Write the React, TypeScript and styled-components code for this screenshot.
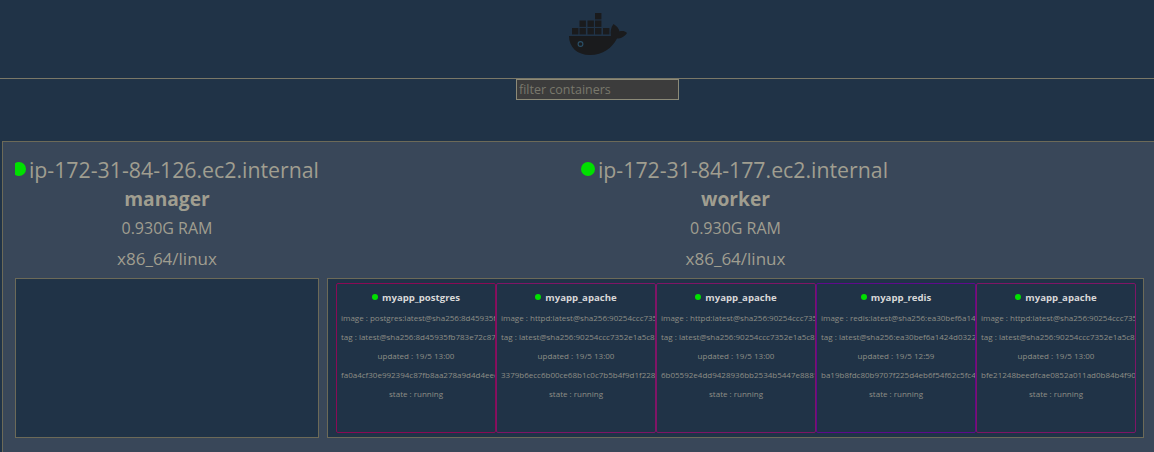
import React from "react";
import styled, { createGlobalStyle } from "styled-components";

const GlobalStyle = createGlobalStyle`
  html, body {
    margin: 0;
    height: 100%;
    overflow: hidden;
    background: #203347;
    font-family: "Open Sans", sans-serif;
  }
`;

const Header = styled.header`
  height: 65px;
  display: flex;
  justify-content: center;
  align-items: flex-start;
  padding: 13px 0 0 41px;
  border-bottom: 1px solid #7a7868;
`;

const FilterRow = styled.div`
  display: flex;
  justify-content: center;
  height: 62px;
  padding-left: 41px;
`;

const FilterInput = styled.input`
  width: 163px;
  height: 21px;
  box-sizing: border-box;
  background: #3c3c3c;
  border: 1px solid #8c8a78;
  padding: 0 2px;
  font: 12.5px "Open Sans", sans-serif;
  color: #9a9888;
  &::placeholder {
    color: #79786c;
    opacity: 1;
  }
`;

const Cluster = styled.main`
  margin-left: 2px;
  width: 1200px;
  height: 320px;
  box-sizing: border-box;
  background: #394759;
  border: 1px solid #6c6a58;
  border-bottom: 0;
  padding: 12px 0 0 12px;
  display: flex;
  gap: 8px;
`;

const Node = styled.section<{ $grow?: boolean }>`
  width: ${(p) => (p.$grow ? "817px" : "304px")};
  flex: none;
  color: #a09e90;
  text-align: center;
  display: flex;
  flex-direction: column;
  overflow: hidden;
`;

const Host = styled.div<{ $tight?: boolean }>`
  display: flex;
  justify-content: ${(p) => (p.$tight ? "flex-end" : "center")};
  align-items: center;
  gap: 3px;
  height: 30px;
  font-size: 21.3px;
  font-weight: 400;
  white-space: nowrap;
  padding-right: ${(p) => (p.$tight ? "0" : "2px")};
`;

const Dot = styled.span<{ $size: number }>`
  width: ${(p) => p.$size}px;
  height: ${(p) => p.$size}px;
  flex: none;
  border-radius: 50%;
  background: #00e000;
`;

const Role = styled.div`
  font-size: 19.2px;
  font-weight: 700;
  height: 30px;
  line-height: 30px;
`;

const Spec = styled.div<{ $wide?: boolean }>`
  font-size: ${(p) => (p.$wide ? "17px" : "16px")};
  height: 29.5px;
  line-height: 29.5px;
`;

const Tasks = styled.div`
  margin-top: 5px;
  height: 160px;
  box-sizing: border-box;
  background: #203347;
  border: 1px solid #6c6a58;
  display: flex;
  padding: 4px 7px 4px 8px;
`;

const Card = styled.article<{ $color: string }>`
  width: 160px;
  height: 150px;
  box-sizing: border-box;
  flex: none;
  border: 1px solid ${(p) => p.$color};
  border-radius: 2px;
  overflow: hidden;
  padding: 0 4px;
  font-size: 8px;
  color: #8e8e86;
  white-space: nowrap;
  text-align: center;
`;

const CardTitle = styled.div`
  display: flex;
  justify-content: center;
  align-items: center;
  gap: 4px;
  height: 23.5px;
  padding-top: 3px;
  box-sizing: border-box;
  font-size: 9.6px;
  font-weight: 700;
  color: #d8d8d8;
`;

const CardLine = styled.div<{ $left?: boolean }>`
  height: 19.2px;
  line-height: 19.2px;
  text-align: ${(p) => (p.$left ? "left" : "center")};
`;

type Task = {
  name: string;
  color: string;
  image: string;
  tag: string;
  updated: string;
  id: string;
};

const tasks: Task[] = [
  {
    name: "myapp_postgres",
    color: "#8a0a55",
    image: "postgres:latest@sha256:8d45935fb783e72c87",
    tag: "latest@sha256:8d45935fb783e72c87b1c0c7b5",
    updated: "19/5 13:00",
    id: "fa0a4cf30e992394c87fb8aa278a9d4d4eec1a",
  },
  {
    name: "myapp_apache",
    color: "#7f1566",
    image: "httpd:latest@sha256:90254ccc7352e1a5c8",
    tag: "latest@sha256:90254ccc7352e1a5c8e0b1c2",
    updated: "19/5 13:00",
    id: "3379b6ecc6b00ce68b1c0c7b5b4f9d1f2286aa",
  },
  {
    name: "myapp_apache",
    color: "#7f1566",
    image: "httpd:latest@sha256:90254ccc7352e1a5c8",
    tag: "latest@sha256:90254ccc7352e1a5c8e0b1c2",
    updated: "19/5 13:00",
    id: "6b05592e4dd9428936bb2534b5447e8881aa02",
  },
  {
    name: "myapp_redis",
    color: "#5f0a8c",
    image: "redis:latest@sha256:ea30bef6a1424d0322",
    tag: "latest@sha256:ea30bef6a1424d0322b1c0c7",
    updated: "19/5 12:59",
    id: "ba19b8fdc80b9707f225d4eb6f54f62c5fc4a1",
  },
  {
    name: "myapp_apache",
    color: "#7f1566",
    image: "httpd:latest@sha256:90254ccc7352e1a5c8",
    tag: "latest@sha256:90254ccc7352e1a5c8e0b1c2",
    updated: "19/5 13:00",
    id: "bfe21248beedfcae0852a011ad0b84b4f90aa2",
  },
];

function DockerLogo() {
  const ink = "#1a1b1d";
  const boxes = [
    [3, 15], [10.5, 15], [18.5, 15], [26, 15], [34, 15],
    [10.5, 7.5], [18.5, 7.5], [26, 7.5],
    [26, 0],
  ];
  return (
    <svg width="58" height="42" viewBox="0 0 58 42" aria-label="docker">
      {boxes.map(([x, y]) => (
        <rect key={`${x}-${y}`} x={x} y={y} width="6.4" height="6.4" fill={ink} />
      ))}
      <path
        fill={ink}
        d="M0 23 H42 C41 19 42 14 44.5 11 C48 13 50 16 50.5 18.5 C53 17.5 56 18 58 20 C56 23.5 52 25.5 48 25.5 C43 35 34 42 21 42 C8 42 0 34 0 23 Z"
      />
      <circle cx="11.5" cy="31" r="2.4" fill={ink} stroke="#2b5068" strokeWidth="1.1" />
    </svg>
  );
}

export default function App() {
  return (
    <>
      <GlobalStyle />
      <Header>
        <DockerLogo />
      </Header>
      <FilterRow>
        <FilterInput placeholder="filter containers" />
      </FilterRow>
      <Cluster>
        <Node>
          <Host $tight>
            <Dot $size={14} />
            ip-172-31-84-126.ec2.internal
          </Host>
          <Role>manager</Role>
          <Spec>0.930G RAM</Spec>
          <Spec $wide>x86_64/linux</Spec>
          <Tasks />
        </Node>
        <Node $grow>
          <Host>
            <Dot $size={14} />
            ip-172-31-84-177.ec2.internal
          </Host>
          <Role>worker</Role>
          <Spec>0.930G RAM</Spec>
          <Spec $wide>x86_64/linux</Spec>
          <Tasks>
            {tasks.map((t, i) => (
              <Card key={i} $color={t.color}>
                <CardTitle>
                  <Dot $size={6} />
                  {t.name}
                </CardTitle>
                <CardLine $left>image : {t.image}</CardLine>
                <CardLine $left>tag : {t.tag}</CardLine>
                <CardLine>updated : {t.updated}</CardLine>
                <CardLine $left>{t.id}</CardLine>
                <CardLine>state : running</CardLine>
              </Card>
            ))}
          </Tasks>
        </Node>
      </Cluster>
    </>
  );
}
